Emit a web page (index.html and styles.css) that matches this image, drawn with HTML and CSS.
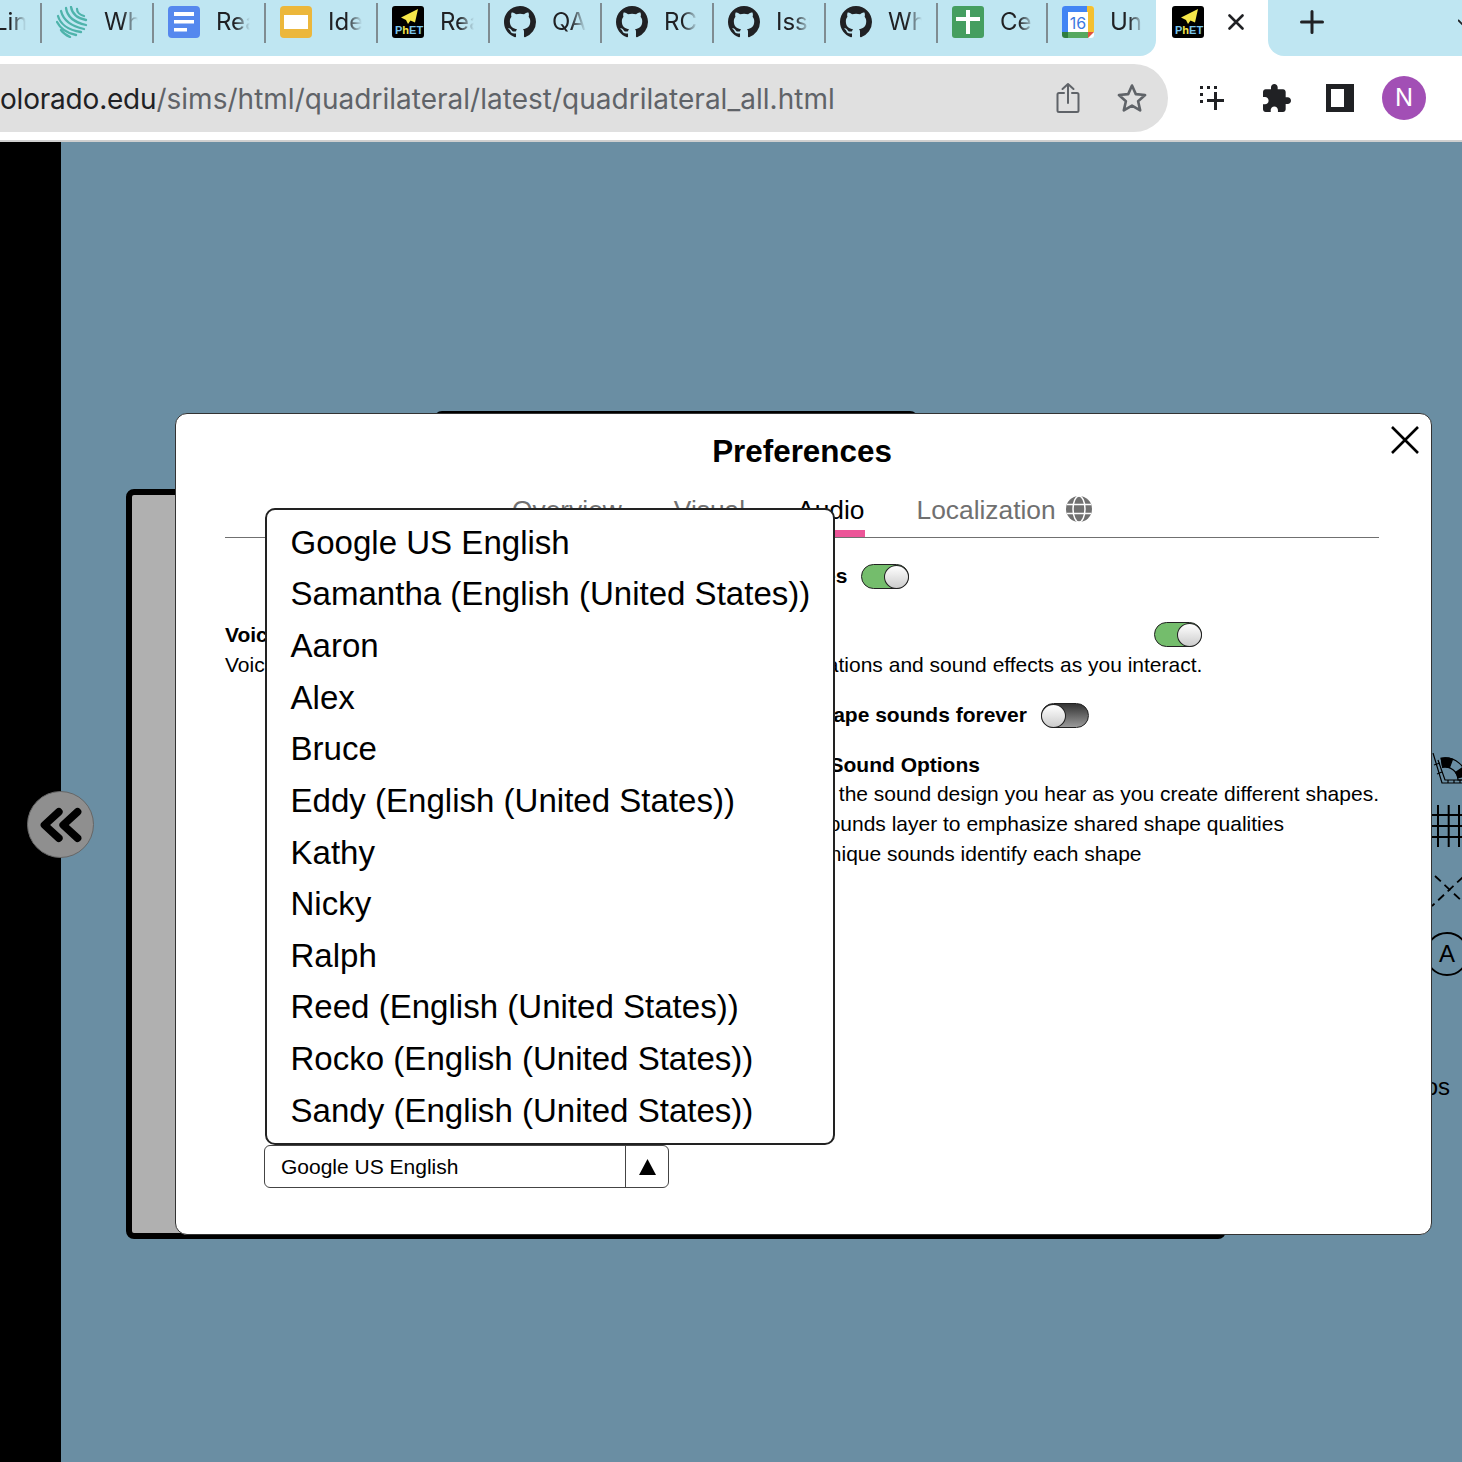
FILE: index.html
```html
<!DOCTYPE html>
<html lang="en">
<head>
<meta charset="utf-8">
<title>Quadrilateral</title>
<link rel="stylesheet" href="styles.css">
</head>
<body>
<svg class="defs" width="0" height="0" aria-hidden="true">
  <symbol id="gh" viewBox="0 0 16 16"><path fill="#202124" d="M8 0C3.58 0 0 3.58 0 8c0 3.54 2.29 6.53 5.47 7.59.4.07.55-.17.55-.38 0-.19-.01-.82-.01-1.49-2.01.37-2.53-.49-2.69-.94-.09-.23-.48-.94-.82-1.13-.28-.15-.68-.52-.01-.53.63-.01 1.08.58 1.23.82.72 1.21 1.87.87 2.33.66.07-.52.28-.87.51-1.07-1.78-.2-3.64-.89-3.64-3.95 0-.87.31-1.59.82-2.15-.08-.2-.36-1.02.08-2.12 0 0 .67-.21 2.2.82.64-.18 1.32-.27 2-.27.68 0 1.36.09 2 .27 1.53-1.04 2.2-.82 2.2-.82.44 1.1.16 1.92.08 2.12.51.56.82 1.27.82 2.15 0 3.07-1.87 3.75-3.65 3.95.29.25.54.73.54 1.48 0 1.07-.01 1.93-.01 2.2 0 .21.15.46.55.38A8.013 8.013 0 0016 8c0-4.42-3.58-8-8-8z"/></symbol>
  <symbol id="phet" viewBox="0 0 32 32">
    <rect width="32" height="32" rx="3" fill="#000"/>
    <path fill="#f7e84a" d="M26 3 9 11.500 14 14 16 18 18.500 14.500 23 16.500z"/>
    <text x="3" y="27.500" class="phet-blue">P<tspan class="phet-yellow">h</tspan>ET</text>
  </symbol>
</svg>

<header class="chrome">
  <nav class="tabstrip">
    <div class="tab tab-first"><span class="tab-text">Lin</span></div>
    <div class="tab">
      <svg class="fav" viewBox="0 0 32 32" fill="none" stroke="#4eb3ab" stroke-width="2.300" stroke-linecap="round">
        <path d="M21 3C21 6 24 9 28 10"/><path d="M15 1C16 7 20 12 30 14"/><path d="M10 2C11 10 17 16 30 19"/><path d="M5 5C7 13 14 20 28 23"/><path d="M2 10C4 17 11 24 25 26"/><path d="M1 16C4 22 10 27 20 29"/><path d="M5 24C7 27 10 29 14 31"/>
      </svg>
      <span class="tab-text">Wh</span>
    </div>
    <div class="tab">
      <svg class="fav" viewBox="0 0 32 32"><rect width="32" height="32" rx="4" fill="#5588ee"/><rect x="6" y="6" width="20" height="4" fill="#fff"/><rect x="6" y="14" width="20" height="3.500" fill="#fff"/><rect x="6" y="22" width="13" height="3.500" fill="#fff"/></svg>
      <span class="tab-text">Rea</span>
    </div>
    <div class="tab">
      <svg class="fav" viewBox="0 0 32 32"><rect width="32" height="32" rx="4" fill="#ecb73b"/><rect x="4" y="9" width="24" height="14" fill="#fff"/></svg>
      <span class="tab-text">Ide</span>
    </div>
    <div class="tab"><svg class="fav"><use href="#phet"/></svg><span class="tab-text">Rea</span></div>
    <div class="tab"><svg class="fav"><use href="#gh"/></svg><span class="tab-text">QA</span></div>
    <div class="tab"><svg class="fav"><use href="#gh"/></svg><span class="tab-text">RC</span></div>
    <div class="tab"><svg class="fav"><use href="#gh"/></svg><span class="tab-text">Issu</span></div>
    <div class="tab"><svg class="fav"><use href="#gh"/></svg><span class="tab-text">Wh</span></div>
    <div class="tab tab-ce">
      <svg class="fav" viewBox="0 0 32 32"><rect width="32" height="32" rx="3" fill="#459e60"/><rect x="4" y="11" width="24" height="4" fill="#fff"/><rect x="14" y="4" width="4" height="24" fill="#fff"/></svg>
      <span class="tab-text">Ce</span>
    </div>
    <div class="tab tab-cal">
      <svg class="fav" viewBox="0 0 32 32"><rect width="32" height="32" rx="3" fill="#fff"/><path fill="#4285f4" d="M3 0h22v6H6v20H0V3a3 3 0 0 1 3-3z"/><path fill="#f4c030" d="M25 0h4a3 3 0 0 1 3 3v23h-6V6h-1z"/><path fill="#55a85f" d="M6 26h20v6H6z"/><path fill="#2f7d3f" d="M0 26h6v6H3a3 3 0 0 1-3-3z"/><path fill="#e0533f" d="M26 26h6l-6 6z"/><text x="16" y="22.500" class="cal-num">16</text></svg>
      <span class="tab-text tab-text-un">Un</span>
    </div>
    <div class="tab tab-active">
      <svg class="fav"><use href="#phet"/></svg>
      <svg class="tab-close" viewBox="0 0 16 16" stroke="#202124" stroke-width="2.600" stroke-linecap="round"><path d="M1.500 1.500l13 13M14.500 1.500l-13 13"/></svg>
    </div>
    <div class="tab-rest">
      <svg class="new-tab" viewBox="0 0 24 24" stroke="#202124" stroke-width="3" stroke-linecap="round"><path d="M12 1.500v21M1.500 12h21"/></svg>
      <svg class="tab-chev" viewBox="0 0 10 10" fill="none" stroke="#202124" stroke-width="1.800"><path d="M0 2l5 5 5-5"/></svg>
    </div>
  </nav>
  <div class="toolbar">
    <div class="omnibox">
      <div class="url"><span class="url-host">olorado.edu</span>/sims/html/quadrilateral/latest/quadrilateral_all.html</div>
      <svg class="omni-share" viewBox="0 0 24 32" fill="none" stroke="#5f6368" stroke-width="2" stroke-linecap="round" stroke-linejoin="round"><path d="M8 11H3a1.500 1.500 0 0 0-1.500 1.500v16A1.500 1.500 0 0 0 3 30h18a1.500 1.500 0 0 0 1.500-1.500v-16A1.500 1.500 0 0 0 21 11h-5"/><path d="M12 21V2M6.500 7 12 2l5.500 5"/></svg>
      <svg class="omni-star" viewBox="0 0 30 30" fill="none" stroke="#5f6368" stroke-width="2.600" stroke-linejoin="round"><path d="M15 2.500l3.800 8.600 9.300.9-7 6.200 2.100 9.200-8.200-4.800-8.200 4.800 2.100-9.200-7-6.200 9.300-.9z"/></svg>
    </div>
    <div class="tools">
      <svg class="tool tool-add" viewBox="0 0 24 24" fill="#202124"><rect x="0" y="0" width="3" height="3"/><rect x="7" y="0" width="3" height="3"/><rect x="14" y="0" width="3" height="3"/><rect x="0" y="7" width="3" height="3"/><rect x="0" y="14" width="3" height="3"/><rect x="7" y="13" width="17" height="3"/><rect x="14" y="6" width="3" height="18"/></svg>
      <svg class="tool tool-ext" viewBox="2 1 21 21"><path fill="#202124" d="M20.500 11H19V7c0-1.100-.9-2-2-2h-4V3.500C13 2.120 11.880 1 10.500 1S8 2.120 8 3.500V5H4c-1.100 0-1.990.9-1.990 2v3.800H3.500c1.490 0 2.700 1.210 2.700 2.700s-1.210 2.700-2.700 2.700H2V20c0 1.100.9 2 2 2h3.800v-1.500c0-1.490 1.210-2.700 2.700-2.700 1.490 0 2.700 1.210 2.700 2.700V22H17c1.100 0 2-.9 2-2v-4h1.500c1.380 0 2.500-1.120 2.500-2.500S21.880 11 20.500 11z"/></svg>
      <svg class="tool" viewBox="0 0 28 28"><path fill="#202124" d="M0 0h28v28H0zM5 5v18h13V5z" fill-rule="evenodd"/></svg>
      <div class="avatar">N</div>
    </div>
  </div>
</header>

<main class="stage">
  <aside class="sidebar"></aside>
  <div class="sim-top"></div>
  <div class="sim-frame"></div>
  <button class="nav-back" type="button" aria-label="Back">
    <svg viewBox="0 0 40 32" fill="none" stroke="#000" stroke-width="7" stroke-linecap="round" stroke-linejoin="round"><path d="M18 4 5 16l13 12"/><path d="M35 4 22 16l13 12"/></svg>
  </button>

  <svg class="sim-tool tool-angle" viewBox="0 0 32 32" fill="none" stroke="#000" stroke-width="1.200"><path d="M1 0 10 30H34"/><path d="M6 7 13 27H34M2 12 8 10M5 21 10 19M16 27v3M22 27v3M28 27v3"/><path d="M9.200 5.300A22 22 0 0 1 35 27H26A13 13 0 0 0 10.700 14.200z"/><path fill="#000" d="M9.200 5.300A22 22 0 0 1 20.500 6.300L17.400 14.800A13 13 0 0 0 10.700 14.200z"/><path fill="#000" d="M31 14.400A22 22 0 0 1 34.700 23.200L25.800 24.700A13 13 0 0 0 23.600 19.500z"/></svg>
  <svg class="sim-tool tool-grid" viewBox="0 0 32 42" stroke="#000" stroke-width="2"><path d="M6 0v42M16.700 0v42M27 0v42M0 10h32M0 21h32M0 32h32"/></svg>
  <svg class="sim-tool tool-cross" viewBox="0 0 32 32" stroke="#000" stroke-width="1.800" stroke-dasharray="8 5"><path d="M3 1l30 28M31 2 0 31"/></svg>
  <div class="sim-tool tool-label">A</div>
  <div class="sim-tool tool-os">os</div>

  <section class="modal">
    <button class="modal-close" type="button" aria-label="Close">
      <svg viewBox="0 0 28 28" stroke="#000" stroke-width="2.600"><path d="M1 1l26 26M27 1 1 27"/></svg>
    </button>
    <h1 class="modal-title">Preferences</h1>
    <div class="pref-tabs">
      <span class="pref-tab">Overview</span>
      <span class="pref-tab">Visual</span>
      <span class="pref-tab pref-tab-on">Audio</span>
      <span class="pref-tab">Localization
        <svg class="globe" viewBox="0 0 26 26"><circle cx="13" cy="13" r="13" fill="#707070"/><g fill="none" stroke="#fff" stroke-width="1.500"><ellipse cx="13" cy="13" rx="6" ry="13"/><path d="M1 8.500h24M1 17.500h24"/></g></svg>
      </span>
    </div>
    <div class="pref-body">
      <div class="voicing">
        <div class="label-bold">Voicing</div>
        <div>Voicing</div>
      </div>
      <div class="audio">
        <div class="row"><span class="label-bold">Audio Features</span><span class="toggle toggle-on"></span></div>
        <div class="sounds">
          <div class="row row-between"><span class="label-bold">Sounds</span><span class="toggle toggle-on"></span></div>
          <div class="desc desc-first">Play sonifications and sound effects as you interact.</div>
        </div>
        <div class="extra">
          <div class="row row-forever"><span class="label-bold">Play shape sounds forever</span><span class="toggle toggle-off"></span></div>
          <div class="options">
            <div class="label-bold opts-title">Shape Sound Options</div>
            <div class="desc opts-desc">Choose the sound design you hear as you create different shapes.</div>
            <div class="desc opts-choice">Sounds layer to emphasize shared shape qualities</div>
            <div class="desc opts-choice">Unique sounds identify each shape</div>
          </div>
        </div>
      </div>
    </div>
  </section>

  <div class="listbox">
    <div class="option">Google US English</div>
    <div class="option">Samantha (English (United States))</div>
    <div class="option">Aaron</div>
    <div class="option">Alex</div>
    <div class="option">Bruce</div>
    <div class="option">Eddy (English (United States))</div>
    <div class="option">Kathy</div>
    <div class="option">Nicky</div>
    <div class="option">Ralph</div>
    <div class="option">Reed (English (United States))</div>
    <div class="option">Rocko (English (United States))</div>
    <div class="option">Sandy (English (United States))</div>
  </div>
  <div class="combo">
    <span class="combo-value">Google US English</span>
    <span class="combo-arrow"><svg viewBox="0 0 17 16"><path d="M8.500 0 17 16H0z" fill="#000"/></svg></span>
  </div>
</main>
</body>
</html>
```
FILE: styles.css
```css
* { box-sizing: border-box; }
html, body { margin: 0; padding: 0; }
body { width: 1462px; height: 1462px; overflow: hidden; font-family: "Liberation Sans", Arial, sans-serif; background: #fff; }
.defs { position: absolute; }

.chrome { height: 142px; background: #fff; border-bottom: 2px solid #cfcfcf; overflow: hidden; }
.tabstrip { height: 56px; display: flex; background: #fff; font-family: Inter, sans-serif; margin-left: -70px; }
.tab { flex: 0 0 112px; height: 56px; padding: 6px 0 0 14px; display: flex; align-items: flex-start; position: relative; background: #bfe6f2; }
.tab::after { content: ""; position: absolute; right: 0; top: 3px; width: 2px; height: 40px; background: #7f8c92; }
.tab-ce { flex-basis: 110px; }
.tab-cal { flex-basis: 108px; border-bottom-right-radius: 16px; }
.tab-cal::after { display: none; }
.tab-first { justify-content: flex-end; padding-right: 16px; }
.fav { width: 32px; height: 32px; flex: none; }
.tab-text { display: block; width: 34px; margin-left: 16px; font-size: 24px; line-height: 32px; color: #202124; overflow: hidden; white-space: nowrap;
  -webkit-mask-image: linear-gradient(90deg, #000 55%, transparent 100%); mask-image: linear-gradient(90deg, #000 55%, transparent 100%); }
.tab-text-un { margin-left: 16px; }
.tab-first .tab-text { width: 32px; margin: 0; }
.tab-active { background: #fff; padding-left: 16px; }
.tab-active::after { display: none; }
.tab-close { width: 16px; height: 16px; margin: 8px 0 0 24px; flex: none; }
.tab-rest { flex: 1; display: flex; padding: 10px 0 0 32px; background: #bfe6f2; border-bottom-left-radius: 16px; }
.new-tab { width: 24px; height: 24px; flex: none; }
.tab-chev { width: 10px; height: 10px; margin: 8px 0 0 auto; flex: none; transform: translateX(6px); }
.phet-blue { font: 700 11px "Liberation Sans", sans-serif; fill: #79c6ee; }
.phet-yellow { fill: #f7e84a; }
.cal-num { font: 16px Inter, sans-serif; fill: #3b78e0; text-anchor: middle; }

.toolbar { height: 84px; display: flex; align-items: flex-start; padding-top: 8px; }
.omnibox { width: 1168px; height: 68px; background: #e0e0e0; border-radius: 0 34px 34px 0; display: flex; align-items: center; padding-right: 21px; }
.url { flex: 1; font-family: Inter, sans-serif; font-size: 27.960px; letter-spacing: 0.04px; color: #5f6368; white-space: nowrap; margin-top: 1px; }
.url-host { color: #202124; letter-spacing: -0.18px; }
.omni-share { width: 24px; height: 32px; margin-right: 37px; }
.omni-star { width: 30px; height: 30px; }
.tools { display: flex; align-items: center; height: 68px; padding-left: 32px; }
.tool { width: 28px; height: 28px; margin-right: 36px; flex: none; }
.tool-add { width: 24px; height: 24px; margin-right: 39px; }
.tool-ext { margin-right: 35px; }
.avatar { width: 44px; height: 44px; margin-left: -8px; border-radius: 50%; background: #a24fb5; color: #fff; font: 24px/44px Inter, sans-serif; text-align: center; }

.stage { position: relative; height: 1320px; background: #6a8ea3; overflow: hidden; }
.sidebar { width: 61px; height: 100%; background: #000; }
.sim-top { position: absolute; left: 434px; top: 269px; width: 484px; height: 30px; background: #000; border-radius: 8px 8px 0 0; }
.sim-frame { position: absolute; left: 126px; top: 347px; width: 1100px; height: 750px; background: #b0b0b0; border: 6px solid #000; border-radius: 8px; }
.nav-back { position: absolute; left: 27px; top: 649px; width: 67px; height: 67px; padding: 0; border: 1.500px solid #666; border-radius: 50%; background: #8f8f8f; display: flex; align-items: center; justify-content: center; }
.nav-back svg { width: 44px; height: 36px; }

.sim-tool { position: absolute; }
.tool-angle { left: 1432px; top: 611px; width: 32px; height: 32px; }
.tool-grid { left: 1432px; top: 663px; width: 32px; height: 42px; }
.tool-cross { left: 1432px; top: 733px; width: 32px; height: 32px; }
.tool-label { left: 1425px; top: 790px; width: 44px; height: 44px; border: 2px solid #000; border-radius: 50%; font-size: 24px; line-height: 40px; text-align: center; }
.tool-os { left: 1424px; top: 930px; width: 26px; font-size: 24px; line-height: 30px; text-align: right; overflow: hidden; }

.modal { position: absolute; left: 175px; top: 271px; width: 1257px; height: 822px; background: #fff; border: 1.500px solid #333; border-radius: 12px; padding: 0 52px 0 49px; }
.modal-close { position: absolute; right: 12px; top: 12px; width: 28px; height: 28px; padding: 0; border: 0; background: none; }
.modal-close svg { display: block; width: 28px; height: 28px; }
.modal-title { margin: 19px 0 0; font-size: 31.400px; line-height: 38px; font-weight: 700; text-align: center; color: #000; }
.pref-tabs { display: flex; justify-content: center; gap: 52px; height: 57px; margin-top: 10px; padding-top: 12px; border-bottom: 1.500px solid #707070; }
.pref-tab { font-size: 26.350px; line-height: 34px; color: #707070; white-space: nowrap; height: 44px; }
.pref-tab-on { color: #000; border-bottom: 7px solid #ec5598; }
.globe { width: 26px; height: 26px; margin-left: 3px; vertical-align: -3px; }
.pref-body { display: flex; font-size: 21px; line-height: 30px; color: #000; }
.voicing { width: 471px; padding-top: 82px; }
.label-bold { font-weight: 700; }
.audio { flex: 1; padding-top: 23px; }
.row { display: flex; align-items: center; gap: 14px; height: 30px; }
.row-between { justify-content: space-between; }
.sounds { width: 481px; margin: 28px 0 0 26px; }
.desc { white-space: nowrap; }
.desc-first { margin-top: 1px; }
.extra { margin-left: 65px; }
.row-forever { margin-top: 20px; }
.options { margin: 20px 0 0 1px; }
.opts-desc { margin-top: -1px; }
.opts-choice { margin-left: 54px; }
.toggle { display: block; width: 48px; height: 25px; border: 1.500px solid #222; border-radius: 13px; position: relative; flex: none; }
.toggle::after { content: ""; position: absolute; top: 0; width: 23px; height: 22px; border-radius: 50%; border: 1.500px solid #222; background: linear-gradient(180deg, #fff, #ccc); }
.toggle-on { background: #74bd6c; }
.toggle-on::after { right: -1px; }
.toggle-off { background: linear-gradient(180deg, #333, #999); }
.toggle-off::after { left: -1px; }

.listbox { position: absolute; left: 265px; top: 366px; width: 570px; height: 637px; background: #fff; border: 2px solid #222; border-radius: 10px; padding: 6.700px 0 0 23.500px; }
.option { font-size: 33.050px; line-height: 51.640px; color: #000; white-space: nowrap; }
.combo { position: absolute; left: 264px; top: 1003px; width: 405px; height: 43px; background: #fff; border: 1.500px solid #444; border-radius: 6px; display: flex; align-items: center; }
.combo-value { flex: 1; padding: 1px 0 0 16px; font-size: 21px; color: #000; }
.combo-arrow { width: 43px; height: 100%; border-left: 1.500px solid #444; display: flex; align-items: center; justify-content: center; }
.combo-arrow svg { width: 17px; height: 16px; }
```
